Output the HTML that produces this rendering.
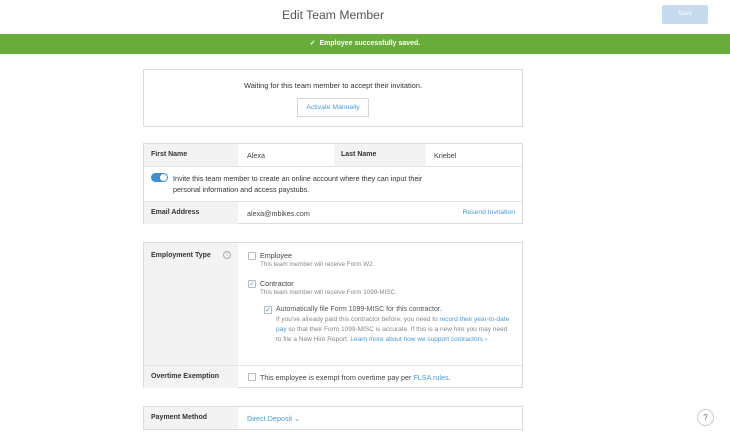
<!DOCTYPE html><html><head><style>
body{margin:0;width:730px;height:440px;background:#fff;font-family:"Liberation Sans",sans-serif;position:relative;overflow:hidden;color:#333}
.a{position:absolute}
.box{position:absolute;left:143px;width:380px;border:1px solid #dcdcdc;box-sizing:border-box}
.lbl{position:absolute;background:#f3f3f4;font-size:7px;font-weight:bold;color:#333;box-sizing:border-box;padding-left:7px}
.t{font-size:7.2px;color:#444}
.s{font-size:6.3px;color:#888}
.lk{color:#4a9bd4}
.cb{position:absolute;width:8px;height:8px;border:1px solid #bbb;border-radius:1px;box-sizing:border-box;background:#fff;font-size:7px;color:#4a9bd4;line-height:7px;text-align:center}
</style></head><body>
<div class="a" style="left:0;width:666px;top:8px;text-align:center;font-size:12.2px;color:#555">Edit Team Member</div>
<div class="a" style="left:662px;top:5px;width:46px;height:19px;background:#c6dcee;border-radius:2px;color:#fff;font-size:6px;text-align:center;line-height:19px">Save</div>
<div class="a" style="left:0;top:34px;width:730px;height:20px;background:#6aac3c;color:#fff;font-size:7px;font-weight:bold;text-align:center;line-height:20px">✓&nbsp;&nbsp;Employee successfully saved.</div>
<div class="box" style="top:69px;height:58px">
 <div class="a t" style="left:0;width:378px;top:11px;text-align:center;color:#333;font-size:7.4px">Waiting for this team member to accept their invitation.</div>
 <div class="a" style="left:153px;top:28px;width:72px;height:19px;border:1px solid #d6d6d6;box-sizing:border-box;font-size:6.8px;color:#4a9bd4;text-align:center;line-height:17px">Activate Manually</div>
</div>
<div class="box" style="top:143px;height:81px">
 <div class="lbl" style="left:0;top:0;width:94px;height:22px;line-height:22px">First Name</div>
 <div class="a t" style="left:103px;top:7px">Alexa</div>
 <div class="lbl" style="left:190px;top:0;width:92px;height:22px;line-height:22px">Last Name</div>
 <div class="a t" style="left:290px;top:7px">Kriebel</div>
 <div class="a" style="left:0;top:22px;width:378px;border-top:1px solid #e3e3e3"></div>
 <div class="a" style="left:7px;top:29px;width:17px;height:9px;border-radius:5px;background:#3e8fd0"><div class="a" style="right:1px;top:1px;width:7px;height:7px;border-radius:50%;background:#fff"></div></div>
 <div class="a t" style="left:29px;top:29px;line-height:11px;color:#333">Invite this team member to create an online account where they can input their<br>personal information and access paystubs.</div>
 <div class="a" style="left:0;top:57px;width:378px;border-top:1px solid #e3e3e3"></div>
 <div class="lbl" style="left:0;top:58px;width:94px;height:22px;line-height:22px">Email Address</div>
 <div class="a t" style="left:103px;top:65px">alexa@mbikes.com</div>
 <div class="a lk" style="right:7px;top:65px;font-size:6.8px">Resend Invitation</div>
</div>
<div class="box" style="top:242px;height:146px">
 <div class="lbl" style="left:0;top:0;width:94px;height:122px;padding-top:9px">Employment Type</div>
 <div class="a" style="left:79px;top:8px;width:8px;height:8px;border:1px solid #aaa;border-radius:50%;box-sizing:border-box;font-size:5px;color:#999;text-align:center;line-height:6px">i</div>
 <div class="cb" style="left:104px;top:9px"></div>
 <div class="a t" style="left:116px;top:8px">Employee</div>
 <div class="a s" style="left:116px;top:18px">This team member will receive Form W2.</div>
 <div class="cb" style="left:104px;top:37px">✓</div>
 <div class="a t" style="left:116px;top:36px">Contractor</div>
 <div class="a s" style="left:116px;top:46px">This team member will receive Form 1099-MISC.</div>
 <div class="cb" style="left:120px;top:63px">✓</div>
 <div class="a s" style="left:132px;top:62px;width:236px;line-height:10px;font-size:6.5px"><span style="color:#555;font-size:7px">Automatically file Form 1099-MISC for this contractor.</span><br>If you've already paid this contractor before, you need to <span class="lk">record their year-to-date pay</span> so that their Form 1099-MISC is accurate. If this is a new hire you may need to file a New Hire Report. <span class="lk">Learn more about how we support contractors ›</span></div>
 <div class="a" style="left:0;top:122px;width:378px;border-top:1px solid #e3e3e3"></div>
 <div class="lbl" style="left:0;top:123px;width:94px;height:22px;line-height:22px">Overtime Exemption</div>
 <div class="cb" style="left:104px;top:130px"></div>
 <div class="a t" style="left:116px;top:130px">This employee is exempt from overtime pay per <span class="lk">FLSA rules</span>.</div>
</div>
<div class="box" style="top:406px;height:24px">
 <div class="lbl" style="left:0;top:0;width:94px;height:22px;line-height:22px">Payment Method</div>
 <div class="a lk" style="left:103px;top:7px;font-size:7.2px">Direct Deposit ⌄</div>
</div>
<div class="a" style="left:697px;top:409px;width:17px;height:17px;border-radius:50%;border:1px solid #ccc;box-sizing:border-box;font-size:8px;color:#666;text-align:center;line-height:15px">?</div>
</body></html>
